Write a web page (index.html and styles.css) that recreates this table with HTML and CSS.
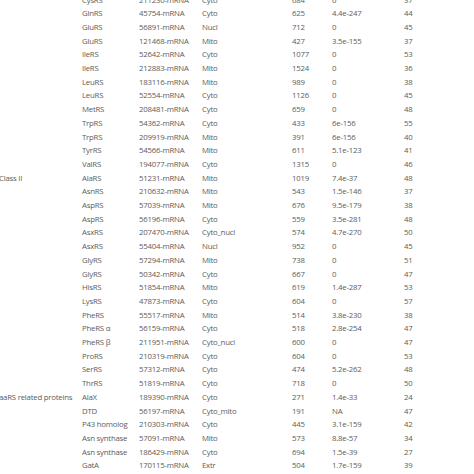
FILE: index.html
```html
<!DOCTYPE html>
<html>
<head>
<meta charset="utf-8">
<link rel="stylesheet" href="styles.css">
</head>
<body>
<table class="tbl">
<colgroup><col class="c1"><col class="c2"><col class="c3"><col class="c4"><col class="c5"><col class="c6"><col class="c7"></colgroup>
<tbody>
<tr><td></td><td>CysRS</td><td>211230-mRNA</td><td>Cyto</td><td>684</td><td>0</td><td>37</td></tr>
<tr><td></td><td>GlnRS</td><td>45754-mRNA</td><td>Cyto</td><td>625</td><td>4.4e-247</td><td>44</td></tr>
<tr><td></td><td>GluRS</td><td>56891-mRNA</td><td>Nucl</td><td>712</td><td>0</td><td>45</td></tr>
<tr><td></td><td>GluRS</td><td>121468-mRNA</td><td>Mito</td><td>427</td><td>3.5e-155</td><td>37</td></tr>
<tr><td></td><td>IleRS</td><td>52642-mRNA</td><td>Cyto</td><td>1077</td><td>0</td><td>53</td></tr>
<tr><td></td><td>IleRS</td><td>212883-mRNA</td><td>Mito</td><td>1524</td><td>0</td><td>36</td></tr>
<tr><td></td><td>LeuRS</td><td>183116-mRNA</td><td>Mito</td><td>989</td><td>0</td><td>38</td></tr>
<tr><td></td><td>LeuRS</td><td>52554-mRNA</td><td>Cyto</td><td>1126</td><td>0</td><td>45</td></tr>
<tr><td></td><td>MetRS</td><td>208481-mRNA</td><td>Cyto</td><td>659</td><td>0</td><td>48</td></tr>
<tr><td></td><td>TrpRS</td><td>54362-mRNA</td><td>Cyto</td><td>433</td><td>6e-156</td><td>55</td></tr>
<tr><td></td><td>TrpRS</td><td>209919-mRNA</td><td>Mito</td><td>391</td><td>6e-156</td><td>40</td></tr>
<tr><td></td><td>TyrRS</td><td>54566-mRNA</td><td>Mito</td><td>611</td><td>5.1e-123</td><td>41</td></tr>
<tr><td></td><td>ValRS</td><td>194077-mRNA</td><td>Cyto</td><td>1315</td><td>0</td><td>46</td></tr>
<tr><td>Class II</td><td>AlaRS</td><td>51231-mRNA</td><td>Mito</td><td>1019</td><td>7.4e-37</td><td>48</td></tr>
<tr><td></td><td>AsnRS</td><td>210632-mRNA</td><td>Mito</td><td>543</td><td>1.5e-146</td><td>37</td></tr>
<tr><td></td><td>AspRS</td><td>57039-mRNA</td><td>Mito</td><td>676</td><td>9.5e-179</td><td>38</td></tr>
<tr><td></td><td>AspRS</td><td>56196-mRNA</td><td>Cyto</td><td>559</td><td>3.5e-281</td><td>48</td></tr>
<tr><td></td><td>AsxRS</td><td>207470-mRNA</td><td>Cyto_nucl</td><td>574</td><td>4.7e-270</td><td>50</td></tr>
<tr><td></td><td>AsxRS</td><td>55404-mRNA</td><td>Nucl</td><td>952</td><td>0</td><td>45</td></tr>
<tr><td></td><td>GlyRS</td><td>57294-mRNA</td><td>Mito</td><td>738</td><td>0</td><td>51</td></tr>
<tr><td></td><td>GlyRS</td><td>50342-mRNA</td><td>Cyto</td><td>667</td><td>0</td><td>47</td></tr>
<tr><td></td><td>HisRS</td><td>51854-mRNA</td><td>Mito</td><td>619</td><td>1.4e-287</td><td>53</td></tr>
<tr><td></td><td>LysRS</td><td>47873-mRNA</td><td>Cyto</td><td>604</td><td>0</td><td>57</td></tr>
<tr><td></td><td>PheRS</td><td>55517-mRNA</td><td>Mito</td><td>514</td><td>3.8e-230</td><td>38</td></tr>
<tr><td></td><td>PheRS α</td><td>56159-mRNA</td><td>Cyto</td><td>518</td><td>2.8e-254</td><td>47</td></tr>
<tr><td></td><td>PheRS β</td><td>211951-mRNA</td><td>Cyto_nucl</td><td>600</td><td>0</td><td>47</td></tr>
<tr><td></td><td>ProRS</td><td>210319-mRNA</td><td>Cyto</td><td>604</td><td>0</td><td>53</td></tr>
<tr><td></td><td>SerRS</td><td>57312-mRNA</td><td>Cyto</td><td>474</td><td>5.2e-262</td><td>48</td></tr>
<tr><td></td><td>ThrRS</td><td>51819-mRNA</td><td>Cyto</td><td>718</td><td>0</td><td>50</td></tr>
<tr><td>aaRS related proteins</td><td>AlaX</td><td>189390-mRNA</td><td>Cyto</td><td>271</td><td>1.4e-33</td><td>24</td></tr>
<tr><td></td><td>DTD</td><td>56197-mRNA</td><td>Cyto_mito</td><td>191</td><td>NA</td><td>47</td></tr>
<tr><td></td><td>P43 homolog</td><td>210303-mRNA</td><td>Cyto</td><td>445</td><td>3.1e-159</td><td>42</td></tr>
<tr><td></td><td>Asn synthase</td><td>57091-mRNA</td><td>Mito</td><td>573</td><td>8.8e-57</td><td>34</td></tr>
<tr><td></td><td>Asn synthase</td><td>186429-mRNA</td><td>Cyto</td><td>694</td><td>1.5e-39</td><td>27</td></tr>
<tr><td></td><td>GatA</td><td>170115-mRNA</td><td>Extr</td><td>504</td><td>1.7e-159</td><td>39</td></tr>
</tbody>
</table>
</body>
</html>
```
FILE: styles.css
```css
html, body {
  margin: 0;
  padding: 0;
  background: #ffffff;
  overflow: hidden;
}
.tbl {
  border-collapse: collapse;
  table-layout: fixed;
  width: 474px;
  margin-top: -6.5px;
  margin-left: -1px;
  font-family: "Open Sans", sans-serif;
  font-size: 7.8px;
  letter-spacing: -0.22px;
  color: #5c5c5c;
}
.tbl td {
  padding: 0;
  height: 13.7px;
  line-height: 13.7px;
  white-space: nowrap;
  vertical-align: middle;
  overflow: hidden;
}
.c1 { width: 83px; }
.c2 { width: 57px; }
.c3 { width: 63px; }
.c4 { width: 90px; }
.c5 { width: 40px; }
.c6 { width: 72px; }
.c7 { width: 69px; }
```
